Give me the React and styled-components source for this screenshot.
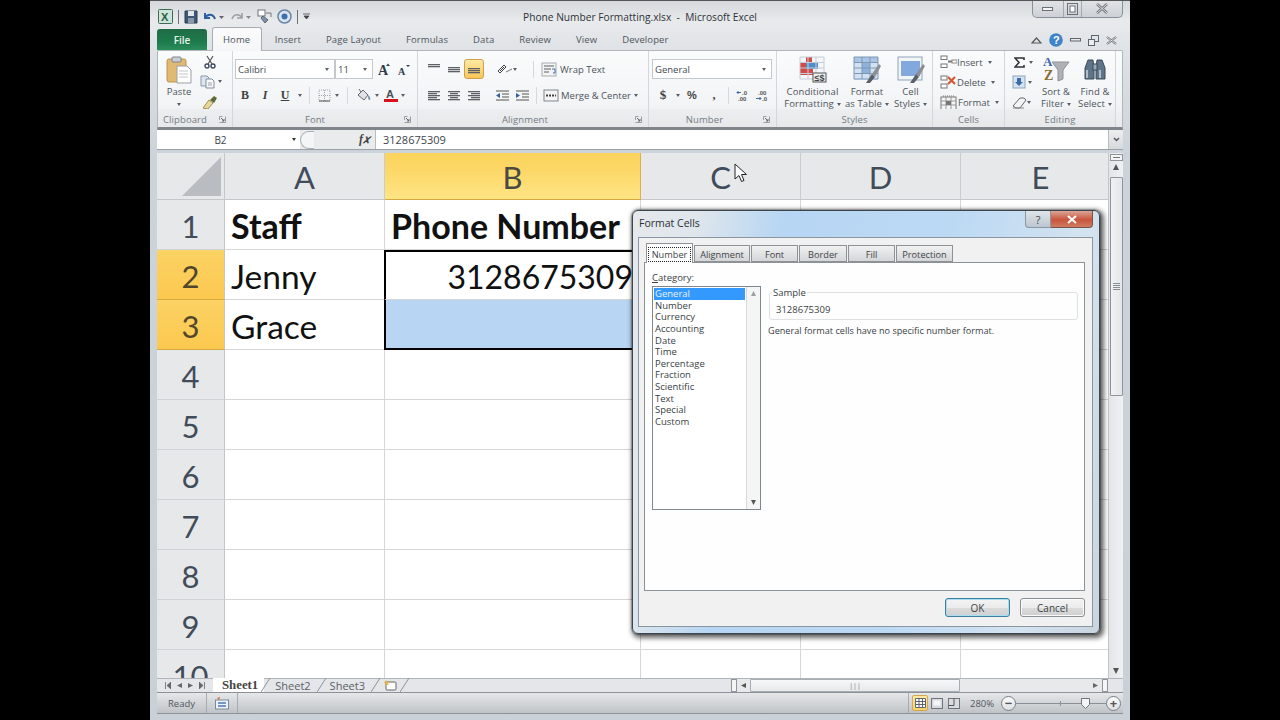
import React from "react";
import styled, { createGlobalStyle } from "styled-components";

const Global = createGlobalStyle`
  html, body { margin: 0; height: 100%; background: #000; }
  #root { height: 720px; width: 1280px; overflow: hidden; }
  * { box-sizing: border-box; }
`;
const UI = `"Open Sans", "Noto Sans", sans-serif`;
const Page = styled.div`display: flex; justify-content: center; width: 1280px; height: 720px; background: #000; font-family: ${UI};`;
const Window = styled.div`
  position: relative; width: 980px; height: 720px; display: flex; flex-direction: column; overflow: hidden;
  padding: 0 7px 6px 7px;
  background: linear-gradient(180deg, #d5d8dc 0, #e8eaec 20px, #dfe2e6 50px, #cdd3da 150px, #c9d0d8 720px);
  border-top: 1px solid #555;
`;
const TitleBar = styled.div`display: grid; grid-template-columns: 1fr auto 1fr; height: 27px; align-items: center;`;
const Qat = styled.div`display: flex; align-items: center; gap: 5px; padding: 4px 0 0 1px;`;
const QatSep = styled.div`width: 1px; height: 14px; background: #6b7078;`;
const TitleText = styled.div`font-size: 10.2px; color: #2d3238; padding-top: 4px; white-space: pre;`;
const WinBtns = styled.div`
  justify-self: end; display: flex; height: 17px; margin-top: -11px; border: 1px solid #8a9098; border-top: none;
  border-radius: 0 0 5px 5px; background: linear-gradient(180deg,#e0e3e6,#cdd1d6); width: 91px;
`;
const WinBtn = styled.div`flex: ${p => p.$w}; display: flex; align-items: center; justify-content: center; border-left: ${p => p.$first ? "none" : "1px solid #a4a9b0"};`;
const TabsRow = styled.div`display: flex; height: 22px; align-items: flex-end; position: relative; z-index: 1;`;
const FileTab = styled.div`
  width: 50px; height: 21px; background: linear-gradient(180deg,#1f6b46,#1d7a4c 60%,#2b8e5d); color: #e8f3ec; font-size: 10px; font-weight: 600;
  display: flex; align-items: center; justify-content: center; border-radius: 3px 3px 0 0; margin-right: 5px;
`;
const Tab = styled.div`
  height: ${p => p.$active ? "22px" : "21px"}; padding: ${p => p.$active ? "0 11px 0 10px" : "0 12.5px"}; font-size: 9.5px; letter-spacing: .1px; color: #4e555c; display: flex; align-items: center;
  ${p => p.$active && `background: linear-gradient(180deg,#fbfbfc,#f5f6f7); border: 1px solid #a9adb2; border-bottom: none; border-radius: 3px 3px 0 0; margin-bottom: -1px; height: 24px;`}
`;
const TabRight = styled.div`margin-left: auto; display: flex; align-items: center; gap: 7px; padding: 0 6px 3px 0;`;
const Ribbon = styled.div`
  display: flex; height: 80px; background: linear-gradient(180deg,#fafbfb 0,#f3f4f6 70%,#e8eaed 100%); border: 1px solid #b2b6ba; border-bottom: 3px solid #7f858b; border-radius: 2px 2px 0 0;
`;
const Group = styled.div`width: ${p => p.$w}px; flex: none; display: flex; flex-direction: column; border-right: 1px solid #d3d6da;`;
const GroupBody = styled.div`flex: 1; display: flex; min-height: 0; padding-left: ${p => p.$pl || 0}px;`;
const GroupLabel = styled.div`position: relative; flex: none; height: 18px; padding: 2px ${p => p.$pr || 0}px 0 0; background: linear-gradient(180deg,#eceef0,#e6e8ea); color: #737b83; font-size: 9.5px; letter-spacing: .1px; display: flex; align-items: center; justify-content: center;`;
const Launcher = styled.svg`position: absolute; right: 6px; top: 7px;`;
const Col = styled.div`display: flex; flex-direction: column; flex: none; align-items: flex-start; gap: ${p => p.$gap || 0}px; padding: ${p => p.$pad || 0}; width: ${p => p.$w ? p.$w + "px" : "auto"};`;
const RowLine = styled.div`display: flex; flex: none; align-items: center; height: ${p => p.$h || 26}px; gap: ${p => p.$gap || 0}px;`;
const BigBtn = styled.div`width: ${p => p.$w}px; flex: none; display: flex; flex-direction: column; align-items: center; padding-top: ${p => p.$top ?? 4}px; color: #4d545b; font-size: 9.5px; line-height: 12px; text-align: center; white-space: nowrap; letter-spacing: .1px;`;
const BigIcon = styled.div`height: ${p => p.$h || 29}px; flex: none; display: flex; align-items: center; justify-content: center; margin-bottom: 2px;`;
const PasteCaret = styled.div`margin-top: 5px; line-height: 0;`;
const Combo = styled.div`width: ${p => p.$w}px; height: 20px; background: #fff; border: 1px solid #c4c8cc; display: flex; align-items: center; justify-content: space-between; padding: 0 5px 0 2px; font-size: 9.5px; color: #444b52;`;
const Caret = styled.span`display: inline-block; width: 0; height: 0; border-left: 2.5px solid transparent; border-right: 2.5px solid transparent; border-top: 3px solid ${p => p.$c || "#5a6068"}; margin-left: ${p => p.$ml ?? 3}px; flex: none; vertical-align: middle;`;
const Tool = styled.div`width: ${p => p.$w || 20}px; height: 20px; margin-left: ${p => p.$l || 0}px; display: flex; align-items: center; justify-content: center; flex: none; color: #404040; font-family: ${p => p.$sans ? '"Liberation Sans", sans-serif' : '"Liberation Serif", serif'}; font-size: ${p => p.$fs || 12}px; font-weight: 700; font-style: ${p => p.$it ? "italic" : "normal"}; text-decoration: ${p => p.$u ? "underline" : "none"}; ${p => p.$on && `background: linear-gradient(180deg,#fde9a4,#f9c757); border: 1px solid #d2a04c; border-radius: 3px;`}`;
const VSep = styled.div`width: 1px; height: 17px; background: #d6d9dc; margin: 0 ${p => p.$r ?? 5}px 0 ${p => p.$l ?? 5}px; flex: none;`;
const Shift = styled.span`display: flex; align-items: center; flex: none; margin-left: ${p => p.$l || 0}px;`;
const SmallText = styled.span`font-size: 9.5px; color: #4d545b; white-space: nowrap; margin-left: ${p => p.$ml || 0}px;`;
const FormulaBar = styled.div`display: flex; flex: none; height: 20px; background: #fff; border-bottom: 1px solid #9aa0a6; font-size: 10px; color: #3e444a;`;
const NameBox = styled.div`width: 130px; display: flex; align-items: center; justify-content: center; flex: none; padding-right: 3px;`;
const NameCaret = styled.div`width: 14px; display: flex; align-items: center; justify-content: center;`;
const FxBox = styled.div`width: 76px; flex: none; display: flex; align-items: center; justify-content: flex-end; padding-right: 5px; background: #eaebed; border-right: 1px solid #b8bcc0; margin-left: -1px; position: relative; font-family: "Liberation Serif", serif; font-style: italic; font-weight: 700; font-size: 12px; color: #444;`;
const Notch = styled.div`position: absolute; left: 0; top: 1px; width: 14px; height: 18px; border-radius: 9px 0 0 9px; border: 1px solid #a8acb0; border-right: none; background: #f4f5f6;`;
const FormulaInput = styled.div`flex: 1; display: flex; align-items: center; padding-left: 7px; font-size: 11px;`;
const Expand = styled.div`width: 15px; display: flex; align-items: center; justify-content: center; background: linear-gradient(180deg,#eceef0,#d7dadd); border-left: 1px solid #bbb;`;
const SheetArea = styled.div`display: flex; flex: none; height: 525px; margin-top: 3px; background: #fff;`;
const Grid = styled.div`flex: 1; min-width: 0; overflow: hidden; display: grid; grid-template-columns: 68px 160px 256px 160px 160px 160px; grid-auto-rows: 50px; grid-template-rows: 47px;`;
const Corner = styled.div`background: #e7e8ea; border-right: 1px solid #c4c7ca; border-bottom: 1px solid #c4c7ca; display: flex; align-items: flex-end; justify-content: flex-end; padding: 0 3px 3px 0;`;
const ColHead = styled.div`
  display: flex; align-items: center; justify-content: center; padding-top: 2px; font-family: Lato, sans-serif; font-size: 31px; color: ${p => p.$on ? "#4a4a42" : "#414c5a"};
  background: ${p => p.$on ? "linear-gradient(180deg,#fbd35c 0,#fcd869 40%,#ffe584 100%)" : "#e7e8ea"}; border-right: 1px solid ${p => p.$on ? "#d8b24f" : "#c9ccd0"}; border-bottom: 1px solid ${p => p.$on ? "#d8a940" : "#c4c7ca"};
`;
const RowHead = styled.div`
  display: flex; align-items: center; justify-content: center; padding-top: 3px; font-family: Lato, sans-serif; font-size: 31px; color: ${p => p.$on ? "#50462a" : "#414c5a"};
  background: ${p => p.$on ? "linear-gradient(180deg,#fbd264,#fcc94f)" : "#e7e8ea"}; border-right: 1px solid #c4c7ca; border-bottom: 1px solid ${p => p.$on ? "#d8a940" : "#d0d3d6"};
`;
const Cell = styled.div`
  display: flex; align-items: center; padding: 2px 6px 0; white-space: nowrap; font-family: Lato, sans-serif; font-size: ${p => p.$num ? 32 : p.$bold ? 34 : 33.5}px; color: #111; font-weight: ${p => p.$bold ? 700 : 400};
  justify-content: ${p => p.$right ? "flex-end" : "flex-start"}; background: ${p => p.$bg || "#fff"};
  border-right: 1px solid #d6d6d6; border-bottom: 1px solid #d6d6d6;
  ${p => p.$selTop && "border-top: 2px solid #000; border-left: 2px solid #000; border-right: 2px solid #000; margin-left: -1px;"}
  ${p => p.$selBottom && "border-bottom: 2px solid #000; border-left: 2px solid #000; border-right: 2px solid #000; margin-left: -1px;"}
`;
const VScroll = styled.div`width: 15px; flex: none; background: linear-gradient(90deg,#e3e5e8,#f0f1f3); border-left: 1px solid #c4c7ca; display: flex; flex-direction: column; align-items: center;`;
const Thumb = styled.div`width: 13px; height: 219px; margin-top: 4px; background: linear-gradient(90deg,#f0f1f2,#e4e6e8); border: 1px solid #8f959b; border-radius: 1px; display: flex; align-items: center; justify-content: center;`;
const Split = styled.div`width: 13px; height: 7px; margin-top: 1px; border: 1px solid #8f959b; background: #f4f4f4; display: flex; align-items: center; justify-content: center;`;
const SplitMark = styled.div`width: 7px; height: 1px; background: #777;`;
const ScrollArrow = styled.div`height: ${p => p.$h}px; display: flex; align-items: center; justify-content: center; margin-top: ${p => p.$auto ? "auto" : 0};`;
const TabBar = styled.div`display: flex; flex: none; height: 14px; background: #e4e6e9; border-top: 1px solid #b0b4b9; align-items: stretch; color: #5a6066; font-size: 11px;`;
const SheetNav = styled.div`width: 56px; display: flex; align-items: center; justify-content: space-around; padding: 0 5px; flex: none;`;
const SheetTab = styled.div`display: flex; align-items: center; padding: ${p => p.$pad || "0 8px"}; flex: none; ${p => p.$on ? `background: #fff; font-weight: 700; font-family: "Liberation Serif", serif; font-size: 12.8px; color: #444;` : ""} margin-top: -1px; height: 14px;`;
const SheetSlash = styled.svg`flex: none; margin: -1px -3px 0;`;
const TabSpacer = styled.div`flex: 1;`;
const HScrollArea = styled.div`width: 377px; display: flex; align-items: center; flex: none; background: #e7e9eb; margin-right: 15px;`;
const HSplit = styled.div`width: 6px; height: 13px; border: 1px solid #8f959b; background: #f5f5f5; flex: none;`;
const HThumb = styled.div`width: 210px; height: 13px; background: linear-gradient(180deg,#f6f7f8,#e6e8ea); border: 1px solid #a8adb3; border-radius: 1px; display: flex; align-items: center; justify-content: center; color: #777; font-size: 7px; flex: none; margin-right: auto;`;
const HArrow = styled.div`width: ${p => p.$w}px; flex: none; display: flex; align-items: center; justify-content: center;`;
const StatusBar = styled.div`display: flex; flex: none; height: 22px; align-items: center; background: linear-gradient(180deg,#e5e7e9,#cfd2d5 60%,#bfc3c7); border-top: 1px solid #8d9298; border-bottom: 1px solid #8d9298; font-size: 9.5px; color: #50565c;`;
const StatusCell = styled.div`height: 100%; display: flex; align-items: center; justify-content: center; width: ${p => p.$w}px; border-right: 1px solid #a8acb0; flex: none;`;
const ViewBtns = styled.div`margin-left: auto; display: flex; align-items: center; height: 100%; border-left: 1px solid #a8acb0; padding-left: 3px; gap: 1px; margin-right: 8px;`;
const ViewBtn = styled.div`width: 16px; height: 16px; display: flex; align-items: center; justify-content: center; ${p => p.$on && "background: linear-gradient(180deg,#fdeaa6,#f8d36c); border: 1px solid #d5a94c; border-radius: 2px;"}`;
const ZoomPct = styled.div`width: 24px; margin-right: 7px; font-size: 9.5px;`;
const ZoomCircle = styled.div`width: 15px; height: 15px; border-radius: 50%; border: 1px solid #7a8086; background: linear-gradient(180deg,#fbfbfb,#dcdfe2); display: flex; align-items: center; justify-content: center; font-size: 13px; font-weight: 700; line-height: 1; color: #555; flex: none; margin-right: ${p => p.$mr || 0}px;`;
const Slider = styled.div`position: relative; width: 90px; height: 1px; background: #8a9096; flex: none;`;
const SliderTick = styled.div`position: absolute; left: 44px; top: -2px; width: 1px; height: 5px; background: #8a9096;`;
const SliderThumb = styled.svg`position: absolute; left: 65px; top: -5px;`;
const Cursor = styled.svg`position: absolute; left: 584px; top: 162px; z-index: 3;`;

/* dialog */
const Dialog = styled.div`
  position: absolute; left: 482px; top: 209px; width: 468px; height: 424px; z-index: 2; border-radius: 6px; border: 1px solid #3c4650; padding: 26px 6px 6px 5px;
  background: linear-gradient(100deg,#e6e9ec 0,#dfe6ec 12%,#b7d6f3 28%,#bcd9f4 60%,#d4e3f0 85%,#c9d4de 100%);
  box-shadow: 2px 2px 5px 2px rgba(20,20,20,.65), 0 0 2px #222;
  display: flex; flex-direction: column;
`;
const DialogTitle = styled.div`position: absolute; left: 6px; top: 5px; font-size: 10.5px; color: #2a2e33;`;
const DlgBtns = styled.div`position: absolute; right: 6px; top: 0; display: flex; height: 17px;`;
const HelpBtn = styled.div`width: 26px; border: 1px solid #8b97a3; border-top: none; border-radius: 0 0 0 4px; background: linear-gradient(180deg,#dfe5ea,#bcc6d0); display: flex; align-items: center; justify-content: center; font-size: 11px; color: #444;`;
const CloseBtn = styled.div`width: 42px; border: 1px solid #7d5148; border-top: none; border-left: none; border-radius: 0 0 4px 0; background: linear-gradient(180deg,#dca596,#c9553c 55%,#cf7d62); display: flex; align-items: center; justify-content: center;`;
const DlgInner = styled.div`flex: 1; background: #f1f1f1; border: 1px solid #8a96a2; padding: 6px 7px 0 5px; display: flex; flex-direction: column;`;
const DlgTabs = styled.div`display: flex; height: 18px; align-items: flex-end; padding-left: 2px;`;
const DlgTab = styled.div`
  width: ${p => p.$w}px; height: ${p => p.$on ? "19px" : "17px"}; margin-right: 1px; padding-top: 1px; font-size: 9.2px; color: #3e4348; display: flex; align-items: center; justify-content: center;
  background: ${p => p.$on ? "#fff" : "linear-gradient(180deg,#f2f2f2,#e2e3e4 50%,#d4d6d8)"}; border: 1px solid #8d9296; border-bottom: ${p => p.$on ? "none" : "1px solid #8d9296"};
  ${p => p.$on && "position: relative; margin-bottom: -1px; height: 20px;"}
`;
const Focus = styled.span`border: 1px dotted #222; padding: 1px 3px; line-height: 11px;`;
const DlgPanel = styled.div`height: 329px; flex: none; background: #fefefe; border: 1px solid #8d9296; display: flex; padding: 7px 6px 0 7px; gap: 8px; font-size: 9.5px; color: #3a3f45;`;
const CatCol = styled.div`width: 109px; flex: none;`;
const CatLabel = styled.div`height: 16px; line-height: 15px; &::first-letter { text-decoration: underline; }`;
const CatList = styled.div`height: 224px; border: 1px solid #7f878f; display: flex; background: #fff; padding: 1px;`;
const CatItems = styled.div`width: 91px; flex: none;`;
const CatItem = styled.div`height: 11.65px; line-height: 11.65px; padding-left: 1px; white-space: nowrap; ${p => p.$on && "background: #3399ff; color: #e8f2fb;"}`;
const CatScroll = styled.div`flex: 1; border-left: 1px solid #d6d8da; display: flex; flex-direction: column; justify-content: space-between; align-items: center; padding: 4px 0; margin: -1px -1px -1px 1px; background: #f5f5f5;`;
const RightCol = styled.div`flex: 1; padding-top: 22px; position: relative;`;
const Fieldset = styled.div`position: relative; height: 28px; width: 309px; border: 1px solid #dfe2e5; border-radius: 3px; display: flex; align-items: center; padding: 7px 0 0 6px;`;
const Legend = styled.div`position: absolute; left: 2px; top: -7px; background: #fefefe; padding: 0 1px; line-height: 13px;`;
const Desc = styled.div`margin: 4px 0 0 -1px; white-space: nowrap; line-height: 13px; font-size: 9.15px;`;
const DlgFooter = styled.div`flex: 1; display: flex; justify-content: flex-end; align-items: center; gap: 10px; padding-bottom: 2px;`;
const DlgButton = styled.div`width: 65px; height: 19px; border-radius: 3px; border: 1px solid ${p => p.$def ? "#3d7f9f" : "#8a8f94"}; background: linear-gradient(180deg,#f4f4f4,#ebebeb 50%,#dbdbdb 55%,#cfcfcf); box-shadow: inset 0 0 0 1px ${p => p.$def ? "#a8def0" : "#fbfbfb"}; font-size: 10px; color: #3b3f44; display: flex; align-items: center; justify-content: center;`;

const S = ({ w, h, children, vb }) => <svg width={w} height={h} viewBox={vb || `0 0 ${w} ${h}`} style={{ display: "block", flex: "none" }}>{children}</svg>;

const Lines = ({ ys, xs, w = 12 }) => <S w={14} h={14}>{ys.map((y, i) => <rect key={i} x={xs ? xs[i] : 1} y={y} width={Array.isArray(w) ? w[i] : w} height="1.3" fill="#5c6067" />)}</S>;
const Launch = () => <Launcher width="7" height="7" viewBox="0 0 7 7"><path d="M.5.5h3M.5.5v3.5M.5 6.5h6v-6" stroke="#9a9fa5" fill="none" /><path d="M2 2l3 3M5 3v2H3" stroke="#5f6870" fill="none" /></Launcher>;

const Paste = () => <S w={26} h={28}><rect x="1" y="3" width="19" height="23" rx="2" fill="#e2b972" stroke="#b99451" /><rect x="6" y="1" width="9" height="5" rx="1" fill="#c9cfd6" stroke="#7f858c" /><path d="M11 10h10l4 4v13H11z" fill="#fff" stroke="#9aa0a6" /><path d="M13 15h9M13 18h9M13 21h9" stroke="#c1c5c9" /></S>;
const Scissors = () => <S w={12} h={14}><path d="M3 1l5 8M9 1L4 9" stroke="#555" strokeWidth="1.2" /><circle cx="3" cy="11" r="2" fill="none" stroke="#404a60" strokeWidth="1.4" /><circle cx="9" cy="11" r="2" fill="none" stroke="#404a60" strokeWidth="1.4" /></S>;
const Copy = () => <S w={15} h={14}><path d="M1 1h6l2 2v8H1z" fill="#dce6f0" stroke="#8a97a6" /><path d="M6 4h6l2 2v7H6z" fill="#f8f8f8" stroke="#7f8c9b" /><path d="M8 8h4M8 10h4" stroke="#99a3ad" /></S>;
const Painter = () => <S w={16} h={15}><path d="M1 13l6-8 4 3-5 6z" fill="#e8d79a" stroke="#a68d4c" /><path d="M8 5l4-4 3 2-3 5z" fill="#5b6a38" /></S>;
const GrowA = ({ small }) => <S w={14} h={14}><text x="1" y="13" fontFamily="Liberation Serif" fontWeight="700" fontSize={small ? 10 : 14} fill="#2f3a4a">A</text><path d={small ? "M9 3h4l-2 2z" : "M9 4l2-2.500 2 2.500z"} fill="#2f3a4a" /></S>;
const Borders = () => <S w={13} h={13}><rect x="1" y="1" width="11" height="11" fill="none" stroke="#a2a7ad" strokeDasharray="1 1" /><path d="M6.500 1v11M1 6.500h11" stroke="#a2a7ad" strokeDasharray="1 1" /><path d="M1 12h11" stroke="#555" /></S>;
const Fill = () => <S w={16} h={14}><path d="M2 7l5-5 5 5-4 5z" fill="#dfe3e8" stroke="#5f6770" /><path d="M12 7c2 2 3 3 2 5-2 0-2-2-2-5z" fill="#7c93a8" /><path d="M5 4l-2-3" stroke="#666" /></S>;
const FontColor = () => <S w={14} h={15}><text x="2" y="10" fontFamily="Liberation Sans" fontWeight="700" fontSize="11" fill="#4a4f58">A</text><rect x="0" y="11" width="14" height="3" fill="#d8121c" /></S>;
const Orient = () => <S w={17} h={13}><path d="M2 8l6-6 2 2-6 6z" fill="none" stroke="#444" /><path d="M4 8l4-4" stroke="#444" /><path d="M10 9l6-3" stroke="#777" /></S>;
const Indent = ({ flip }) => <S w={15} h={13}><path d="M1 2h13M7 5h7M7 8h7M1 11h13" stroke="#555" strokeWidth="1.2" /><path d={flip ? "M1 4l4 2.500-4 2.500z" : "M5 4l-4 2.500 4 2.500z"} fill="#34609a" /></S>;
const WrapIcon = () => <S w={16} h={15}><rect x="1" y="1" width="14" height="13" fill="#f4f4f4" stroke="#a7acb1" /><path d="M3 4h10M3 7h7M3 10h5" stroke="#5a5f66" /><path d="M11 7h3v4h-2" stroke="#3f6fa8" fill="none" /></S>;
const MergeIcon = () => <S w={16} h={13}><rect x="1" y="1" width="14" height="11" fill="#f4f4f4" stroke="#7f858c" /><path d="M3 6.500h10" stroke="#444" strokeDasharray="2 1" strokeWidth="2" /></S>;
const IncDec = ({ a, b, arrowTop }) => <S w={14} h={13}><text x={arrowTop ? 7 : 3} y="6" fontSize="6" fontWeight="700" fill="#555" fontFamily="Liberation Sans">{a}</text><text x={arrowTop ? 3 : 7} y="12" fontSize="6" fontWeight="700" fill="#555" fontFamily="Liberation Sans">{b}</text><path d={arrowTop ? "M6 3.500H2l1.500-1.500M2 3.500l1.500 1.500" : "M1 9.500h5l-1.500-1.500M6 9.500l-1.500 1.500"} stroke="#3a6aa5" fill="none" /></S>;
const GridBase = ({ w = 26, h = 24, cols = 3, rows = 4, c = "#c4ced8" }) => <>{Array.from({ length: cols + 1 }).map((_, i) => <path key={"c" + i} d={`M${1 + i * (w - 2) / cols} 1v${h - 2}`} stroke={c} />)}{Array.from({ length: rows + 1 }).map((_, i) => <path key={"r" + i} d={`M1 ${1 + i * (h - 2) / rows}h${w - 2}`} stroke={c} />)}</>;
const CondFmt = () => <S w={28} h={27}><rect x="1" y="1" width="25" height="23" fill="#f4f6f8" /><rect x="7" y="1" width="6" height="6" fill="#d34a4a" /><rect x="1" y="7" width="8" height="6" fill="#d34a4a" /><rect x="7" y="7" width="12" height="6" fill="#4f8ec8" /><rect x="1" y="13" width="13" height="6" fill="#d34a4a" /><GridBase /><rect x="14" y="17" width="13" height="9" fill="#eef0f2" stroke="#555" /><text x="15.500" y="25" fontSize="9" fontWeight="700" fill="#444" fontFamily="Liberation Sans">≤$</text></S>;
const Brush = ({ x = 0 }) => <><path d={`M${x + 13} 27l6-9 3 3-5 6z`} fill="#5a6068" /><path d={`M${x + 19} 18l7-10 2 2-6 11z`} fill="#8c8f94" /></>;
const FmtTable = () => <S w={28} h={27}><rect x="1" y="1" width="24" height="23" fill="#d3e2f3" /><rect x="1" y="1" width="24" height="5" fill="#a9c4e4" /><rect x="9" y="6" width="8" height="12" fill="#8fb2dc" /><GridBase w={26} h={24} c="#7f97b3" /><Brush /></S>;
const CellStyle = () => <S w={28} h={27}><rect x="1" y="1" width="24" height="23" fill="#f2f4f6" stroke="#8da3bb" /><rect x="4" y="5" width="19" height="15" fill="#83a8de" /><Brush /></S>;
const InsertIc = () => <S w={17} h={14}><rect x="1" y="1" width="6" height="3.500" fill="#fff" stroke="#777" /><rect x="1" y="9" width="6" height="3.500" fill="#fff" stroke="#777" /><path d="M8 6.500h5" stroke="#777" strokeWidth="2" /><rect x="12" y="5" width="5" height="3" fill="#fff" stroke="#888" /></S>;
const DeleteIc = () => <S w={17} h={15}><rect x="1" y="1" width="6" height="4" fill="#fff" stroke="#777" /><rect x="1" y="9" width="6" height="4" fill="#fff" stroke="#777" /><path d="M8 2l7 7M15 2l-7 7" stroke="#d55736" strokeWidth="2.200" /></S>;
const FormatIc = () => <S w={17} h={17}><rect x="1" y="3" width="15" height="13" fill="#f4f4f4" stroke="#777" /><path d="M1 7h15M6 3v13M11 3v13M1 11h15" stroke="#999" /><rect x="6" y="7" width="5" height="4" fill="#777" /><path d="M3 2h11" stroke="#777" strokeDasharray="1 1" /></S>;
const Sigma = () => <S w={11} h={11}><path d="M10 3V1H1l4 4.500L1 10h9V8" fill="none" stroke="#2e3338" strokeWidth="1.600" /></S>;
const FillDown = () => <S w={14} h={14}><rect x="1" y="1" width="12" height="12" fill="#d7e3f2" stroke="#8fa4bd" /><path d="M5 3h4v4h2l-4 4-4-4h2z" fill="#3a6ea9" /></S>;
const Eraser = () => <S w={15} h={13}><path d="M1 10l7-8h4l2 2-6 8H4z" fill="#f4f4f4" stroke="#666" /><path d="M1 12h11" stroke="#888" /></S>;
const SortFilter = () => <S w={27} h={27}><text x="0" y="11" fontFamily="Liberation Serif" fontWeight="700" fontSize="13" fill="#3f66a8">A</text><text x="1" y="25" fontFamily="Liberation Serif" fontWeight="700" fontSize="14" fill="#8a6a34">Z</text><path d="M9 7h17l-6 8v9l-5 2V15z" fill="#aeb2b7" stroke="#8f9398" /></S>;
const Binoculars = () => <S w={24} h={24}><path d="M2 11l3-8h5l1 8v11H2z" fill="#5f7488" stroke="#3b4a59" /><path d="M22 11l-3-8h-5l-1 8v11h9z" fill="#5f7488" stroke="#3b4a59" /><rect x="10" y="7" width="4" height="6" fill="#9aa9b7" stroke="#3b4a59" /><path d="M4 13v8M17 13v8" stroke="#cdd6de" strokeWidth="1.500" /></S>;
const Tri = ({ d, c = "#444", s = 5 }) => { const p = { u: `M${s / 2} 0L${s} ${s}H0z`, d: `M0 0H${s}L${s / 2} ${s}z`, l: `M${s} 0V${s}L0 ${s / 2}z`, r: `M0 0V${s}L${s} ${s / 2}z` }[d]; return <S w={s} h={s}><path d={p} fill={c} /></S>; };

const Slash = ({ h = 14 }) => <SheetSlash width="10" height={h} viewBox={`0 0 10 ${h}`}><path d={`M0 ${h}L9 0`} stroke="#8e9399" /></SheetSlash>;

const cats = ["General", "Number", "Currency", "Accounting", "Date", "Time", "Percentage", "Fraction", "Scientific", "Text", "Special", "Custom"];

export default function App() {
  return (
    <Page>
      <Global />
      <Window>
        <TitleBar>
          <Qat>
            <S w={15} h={15}><rect x=".5" y=".5" width="14" height="14" rx="1" fill="#cfe4d8" stroke="#3f6a58" /><text x="3" y="12" fontSize="11" fontWeight="700" fill="#1d5f40" fontFamily="Liberation Sans">X</text></S>
            <QatSep />
            <S w={14} h={14}><path d="M1 1h12v12H1z" fill="#3f5675" stroke="#2c3c52" /><rect x="4" y="1" width="6" height="5" fill="#dfe6ee" /><rect x="4" y="8" width="6" height="5" fill="#89a" /></S>
            <S w={22} h={14}><path d="M2 3v5h5M2 8c2-4 8-5 10 1" fill="none" stroke="#2f5f9e" strokeWidth="2" /><path d="M16 6h5l-2.500 3z" fill="#666" /></S>
            <S w={22} h={14}><path d="M12 3v5H7M12 8c-2-4-8-5-10 1" fill="none" stroke="#9aa1a9" strokeWidth="1.600" /><path d="M16 6h5l-2.500 3z" fill="#888" /></S>
            <S w={15} h={15}><rect x="1" y="1" width="7" height="6" fill="#fff" stroke="#6f7780" /><path d="M6 7l5 4-3 3-4-5z" fill="#7e93aa" stroke="#5b6876" /><path d="M9 4h5v4" stroke="#777" fill="none" /></S>
            <S w={15} h={15}><circle cx="7.500" cy="7.500" r="6.500" fill="#dbe5ef" stroke="#6b86a5" strokeWidth="1.500" /><circle cx="7.500" cy="7.500" r="3" fill="#3d6fb0" /></S>
            <QatSep />
            <S w={7} h={7}><path d="M0 1h7M1 3h5l-2.500 3z" stroke="#444" fill="#444" strokeWidth=".8" /></S>
          </Qat>
          <TitleText>Phone Number Formatting.xlsx  -  Microsoft Excel</TitleText>
          <WinBtns>
            <WinBtn $w="31" $first><S w={11} h={4}><rect x=".5" y=".5" width="10" height="3" fill="#f4f4f4" stroke="#6b7077" /></S></WinBtn>
            <WinBtn $w="18"><S w={11} h={12}><rect x=".5" y=".5" width="10" height="11" fill="none" stroke="#6b7077" /><rect x="3" y="3" width="5" height="6" fill="#fff" stroke="#6b7077" /></S></WinBtn>
            <WinBtn $w="42"><S w={12} h={11}><path d="M1 1l10 9M11 1L1 10" stroke="#6b7077" strokeWidth="2.400" /><path d="M1 1l10 9M11 1L1 10" stroke="#fff" strokeWidth=".8" /></S></WinBtn>
          </WinBtns>
        </TitleBar>
        <TabsRow>
          <FileTab>File</FileTab>
          <Tab $active>Home</Tab>
          <Tab>Insert</Tab><Tab>Page Layout</Tab><Tab>Formulas</Tab><Tab>Data</Tab><Tab>Review</Tab><Tab>View</Tab><Tab>Developer</Tab>
          <TabRight>
            <S w={11} h={7}><path d="M1 6l4.500-5L10 6z" fill="none" stroke="#555" strokeWidth="1.200" /></S>
            <S w={14} h={14}><circle cx="7" cy="7" r="6.800" fill="#3f84c8" /><text x="4" y="11" fontSize="11" fontWeight="700" fill="#fff" fontFamily="Liberation Sans">?</text></S>
            <S w={11} h={4}><rect x=".5" y=".5" width="10" height="2.500" fill="#e8e8e8" stroke="#5c6670" /></S>
            <S w={11} h={11}><rect x="3.500" y=".5" width="7" height="6" fill="none" stroke="#5c6670" /><rect x=".5" y="4.500" width="6" height="6" fill="#eee" stroke="#5c6670" /></S>
            <S w={11} h={9}><path d="M1 1l9 7M10 1L1 8" stroke="#68717a" strokeWidth="2.200" /><path d="M1 1l9 7M10 1L1 8" stroke="#fff" strokeWidth=".7" /></S>
          </TabRight>
        </TabsRow>
        <Ribbon>
          <Group $w={75}>
            <GroupBody>
              <BigBtn $w={42}><BigIcon><Paste /></BigIcon>Paste<PasteCaret><Caret $ml={0} /></PasteCaret></BigBtn>
              <Col $pad="3px 0 0 0" $gap={5}>
                <RowLine $h={15}><Shift $l={4}><Scissors /></Shift></RowLine>
                <RowLine $h={15}><Copy /><Caret /></RowLine>
                <RowLine $h={16}><Shift $l={2}><Painter /></Shift></RowLine>
              </Col>
            </GroupBody>
            <GroupLabel $pr={20}>Clipboard<Launch /></GroupLabel>
          </Group>
          <Group $w={185}>
            <GroupBody>
              <Col $pad="8px 0 0 2px" $gap={5}>
                <RowLine $h={20}>
                  <Combo $w={100}>Calibri<Caret /></Combo>
                  <Combo $w={38}>11<Caret /></Combo>
                  <Shift $l={4}><GrowA /></Shift><Shift $l={6}><GrowA small /></Shift>
                </RowLine>
                <RowLine $h={22}>
                  <Tool>B</Tool><Tool $it>I</Tool><Tool $u>U</Tool><Caret $ml={3} />
                  <VSep $l={7} $r={8} />
                  <Borders /><Caret $ml={4} />
                  <VSep $l={8} $r={8} />
                  <Fill /><Caret $ml={3} />
                  <Shift $l={5}><FontColor /></Shift><Caret $ml={3} />
                </RowLine>
              </Col>
            </GroupBody>
            <GroupLabel $pr={20}>Font<Launch /></GroupLabel>
          </Group>
          <Group $w={231}>
            <GroupBody>
              <Col $pad="8px 0 0 6px" $gap={5}>
                <RowLine $h={20}>
                  <Tool><Lines ys={[2, 4]} /></Tool>
                  <Tool><Lines ys={[5, 7, 9]} /></Tool>
                  <Tool $on><Lines ys={[6, 8, 10]} /></Tool>
                  <Shift $l={12}><Orient /></Shift><Caret $ml={0} />
                  <VSep $l={16} $r={7} />
                  <WrapIcon /><SmallText $ml={3}>Wrap Text</SmallText>
                </RowLine>
                <RowLine $h={22}>
                  <Tool><Lines ys={[3, 5, 7, 9, 11]} w={[12, 9, 12, 9, 12]} /></Tool>
                  <Tool><Lines ys={[3, 5, 7, 9, 11]} w={[12, 8, 12, 8, 12]} xs={[1, 3, 1, 3, 1]} /></Tool>
                  <Tool><Lines ys={[3, 5, 7, 9, 11]} w={[12, 9, 12, 9, 12]} xs={[1, 4, 1, 4, 1]} /></Tool>
                  <Shift $l={11}><Indent /></Shift>
                  <Shift $l={5}><Indent flip /></Shift>
                  <VSep $l={6} $r={6} />
                  <MergeIcon /><SmallText $ml={2}>Merge &amp; Center</SmallText><Caret />
                </RowLine>
              </Col>
            </GroupBody>
            <GroupLabel $pr={16}>Alignment<Launch /></GroupLabel>
          </Group>
          <Group $w={128}>
            <GroupBody>
              <Col $pad="8px 0 0 3px" $gap={5}>
                <RowLine $h={20}><Combo $w={120}>General<Caret /></Combo></RowLine>
                <RowLine $h={22}>
                  <Tool $fs={13} $l={1}>$</Tool><Caret $ml={3} />
                  <Tool $sans $fs={11} $l={2}>%</Tool>
                  <Tool $l={2}>,</Tool>
                  <VSep $l={4} $r={6} />
                  <IncDec a=".0" b=".00" arrowTop />
                  <Shift $l={6}><IncDec a=".00" b=".0" /></Shift>
                </RowLine>
              </Col>
            </GroupBody>
            <GroupLabel $pr={16}>Number<Launch /></GroupLabel>
          </Group>
          <Group $w={156}>
            <GroupBody $pl={6}>
              <BigBtn $w={59}><BigIcon><CondFmt /></BigIcon>Conditional<span>Formatting<Caret /></span></BigBtn>
              <BigBtn $w={50}><BigIcon><FmtTable /></BigIcon>Format<span>as Table<Caret /></span></BigBtn>
              <BigBtn $w={37}><BigIcon><CellStyle /></BigIcon>Cell<span>Styles<Caret /></span></BigBtn>
            </GroupBody>
            <GroupLabel>Styles</GroupLabel>
          </Group>
          <Group $w={72}>
            <GroupBody>
              <Col $pad="1px 0 0 7px">
                <RowLine $h={20}><InsertIc /><SmallText>Insert</SmallText><Caret $ml={5} /></RowLine>
                <RowLine $h={20}><DeleteIc /><SmallText>Delete</SmallText><Caret $ml={5} /></RowLine>
                <RowLine $h={20}><FormatIc /><SmallText $ml={1}>Format</SmallText><Caret $ml={5} /></RowLine>
              </Col>
            </GroupBody>
            <GroupLabel>Cells</GroupLabel>
          </Group>
          <Group $w={111}>
            <GroupBody>
              <Col $pad="1px 0 0 7px" $w={31}>
                <RowLine $h={20}><Shift $l={2}><Sigma /></Shift><Caret $ml={4} /></RowLine>
                <RowLine $h={20}><FillDown /><Caret $ml={2} /></RowLine>
                <RowLine $h={20}><Eraser /><Caret $ml={0} /></RowLine>
              </Col>
              <BigBtn $w={40} $top={2}><BigIcon $h={31}><SortFilter /></BigIcon>Sort &amp;<span>Filter<Caret /></span></BigBtn>
              <BigBtn $w={38} $top={2}><BigIcon $h={31}><Binoculars /></BigIcon>Find &amp;<span>Select<Caret /></span></BigBtn>
            </GroupBody>
            <GroupLabel>Editing</GroupLabel>
          </Group>
        </Ribbon>
        <FormulaBar>
          <NameBox>B2</NameBox>
          <NameCaret><Caret $ml={0} $c="#333" /></NameCaret>
          <FxBox><Notch />f𝑥</FxBox>
          <FormulaInput>3128675309</FormulaInput>
          <Expand><S w={7} h={5}><path d="M1 1l2.500 2.500L6 1" stroke="#555" strokeWidth="1.400" fill="none" /></S></Expand>
        </FormulaBar>
        <SheetArea>
          <Grid>
            <Corner><S w={39} h={39}><path d="M39 0v39H0z" fill="#b9bcc0" /></S></Corner>
            <ColHead>A</ColHead><ColHead $on>B</ColHead><ColHead>C</ColHead><ColHead>D</ColHead><ColHead>E</ColHead>
            <RowHead>1</RowHead><Cell $bold>Staff</Cell><Cell $bold>Phone Number</Cell><Cell /><Cell /><Cell />
            <RowHead $on>2</RowHead><Cell>Jenny</Cell><Cell $right $num $selTop>3128675309</Cell><Cell /><Cell /><Cell />
            <RowHead $on>3</RowHead><Cell>Grace</Cell><Cell $selBottom $bg="#b9d5f4" /><Cell /><Cell /><Cell />
            {[4, 5, 6, 7, 8, 9, 10].map(n => (
              <React.Fragment key={n}><RowHead>{n}</RowHead><Cell /><Cell /><Cell /><Cell /><Cell /></React.Fragment>
            ))}
          </Grid>
          <VScroll>
            <Split><SplitMark /></Split>
            <ScrollArrow $h={12}><Tri d="u" c="#555" s={6} /></ScrollArrow>
            <Thumb><S w={7} h={7}><path d="M0 .5h7M0 2.500h7M0 4.500h7M0 6.500h7" stroke="#8a8f95" /></S></Thumb>
            <ScrollArrow $h={14} $auto><Tri d="d" c="#555" s={6} /></ScrollArrow>
          </VScroll>
        </SheetArea>
        <TabBar>
          <SheetNav><S w={6} h={7}><path d="M.5 0v7M6 0v7L2 3.500z" stroke="#666" strokeWidth=".8" fill="#666" /></S><Tri d="l" c="#666" s={5} /><Tri d="r" c="#666" s={5} /><S w={6} h={7}><path d="M5.500 0v7M0 0v7l4-3.500z" stroke="#666" strokeWidth=".8" fill="#666" /></S></SheetNav>
          <SheetTab $on $pad="0 6px 0 9px">Sheet1</SheetTab><Slash />
          <SheetTab $pad="0 9px 0 7px">Sheet2</SheetTab><Slash />
          <SheetTab $pad="0 9px 0 6px">Sheet3</SheetTab><Slash />
          <SheetTab $pad="0 6px 0 4px"><S w={15} h={12}><rect x="4" y="3" width="10" height="8" rx="1" fill="#fff" stroke="#666" /><path d="M4 1l1 2 2-.500-1 2 1 2-2-1-2 1 1-2-2-1z" fill="#e3b341" /></S></SheetTab><Slash />
          <TabSpacer />
          <HScrollArea>
            <HSplit /><HArrow $w={13}><Tri d="l" c="#555" s={5} /></HArrow>
            <HThumb>|||</HThumb>
            <HArrow $w={13}><Tri d="r" c="#666" s={5} /></HArrow>
            <HSplit />
          </HScrollArea>
        </TabBar>
        <StatusBar>
          <StatusCell $w={50}>Ready</StatusCell>
          <StatusCell $w={31}><S w={14} h={13}><rect x=".5" y="3" width="13" height="9" fill="#eef2f6" stroke="#7b8a9a" /><path d="M3 6h8M3 9h8" stroke="#4a79b8" strokeWidth="1.400" /><path d="M2 1l2 2 1-3z" fill="#d8622e" /></S></StatusCell>
          <ViewBtns>
            <ViewBtn $on><S w={11} h={10}><path d="M.5.5h10v9H.5zM4 .5v9M7.500.5v9M.5 3.500h10M.5 6.500h10" fill="#fff" stroke="#5f6670" /></S></ViewBtn>
            <ViewBtn><S w={12} h={11}><rect x=".5" y=".5" width="11" height="10" fill="#d7d9dc" stroke="#6f757c" /><rect x="2.500" y="2.500" width="7" height="5" fill="#f5f5f5" /></S></ViewBtn>
            <ViewBtn><S w={12} h={11}><rect x=".5" y=".5" width="11" height="10" fill="#dadcdf" stroke="#6f757c" /><path d="M6 .5v7M6 7.500H.5" stroke="#555" /></S></ViewBtn>
          </ViewBtns>
          <ZoomPct>280%</ZoomPct>
          <ZoomCircle>−</ZoomCircle>
          <Slider><SliderTick /><SliderThumb width="9" height="11" viewBox="0 0 9 11"><path d="M.5.500h8v6l-4 4-4-4z" fill="#f4f5f6" stroke="#6f757c" /></SliderThumb></Slider>
          <ZoomCircle $mr={2}>+</ZoomCircle>
        </StatusBar>
        <Cursor width="14" height="20" viewBox="0 0 14 20"><path d="M1 1v15l4-3.500 2.500 6 2.500-1-2.500-6h5z" fill="#fff" stroke="#222" /></Cursor>
        <Dialog>
          <DialogTitle>Format Cells</DialogTitle>
          <DlgBtns>
            <HelpBtn>?</HelpBtn>
            <CloseBtn><S w={10} h={9}><path d="M1 1l8 7M9 1L1 8" stroke="#fff" strokeWidth="2" /></S></CloseBtn>
          </DlgBtns>
          <DlgInner>
            <DlgTabs>
              <DlgTab $w={47} $on><Focus>Number</Focus></DlgTab>
              <DlgTab $w={56}>Alignment</DlgTab>
              <DlgTab $w={47}>Font</DlgTab>
              <DlgTab $w={48}>Border</DlgTab>
              <DlgTab $w={47}>Fill</DlgTab>
              <DlgTab $w={57}>Protection</DlgTab>
            </DlgTabs>
            <DlgPanel>
              <CatCol>
                <CatLabel>Category:</CatLabel>
                <CatList>
                  <CatItems>{cats.map((c, i) => <CatItem key={c} $on={i === 0}>{c}</CatItem>)}</CatItems>
                  <CatScroll><Tri d="u" c="#9a9fa5" s={5} /><Tri d="d" c="#555" s={5} /></CatScroll>
                </CatList>
              </CatCol>
              <RightCol>
                <Fieldset><Legend>Sample</Legend>3128675309</Fieldset>
                <Desc>General format cells have no specific number format.</Desc>
              </RightCol>
            </DlgPanel>
            <DlgFooter>
              <DlgButton $def>OK</DlgButton>
              <DlgButton>Cancel</DlgButton>
            </DlgFooter>
          </DlgInner>
        </Dialog>
      </Window>
    </Page>
  );
}
